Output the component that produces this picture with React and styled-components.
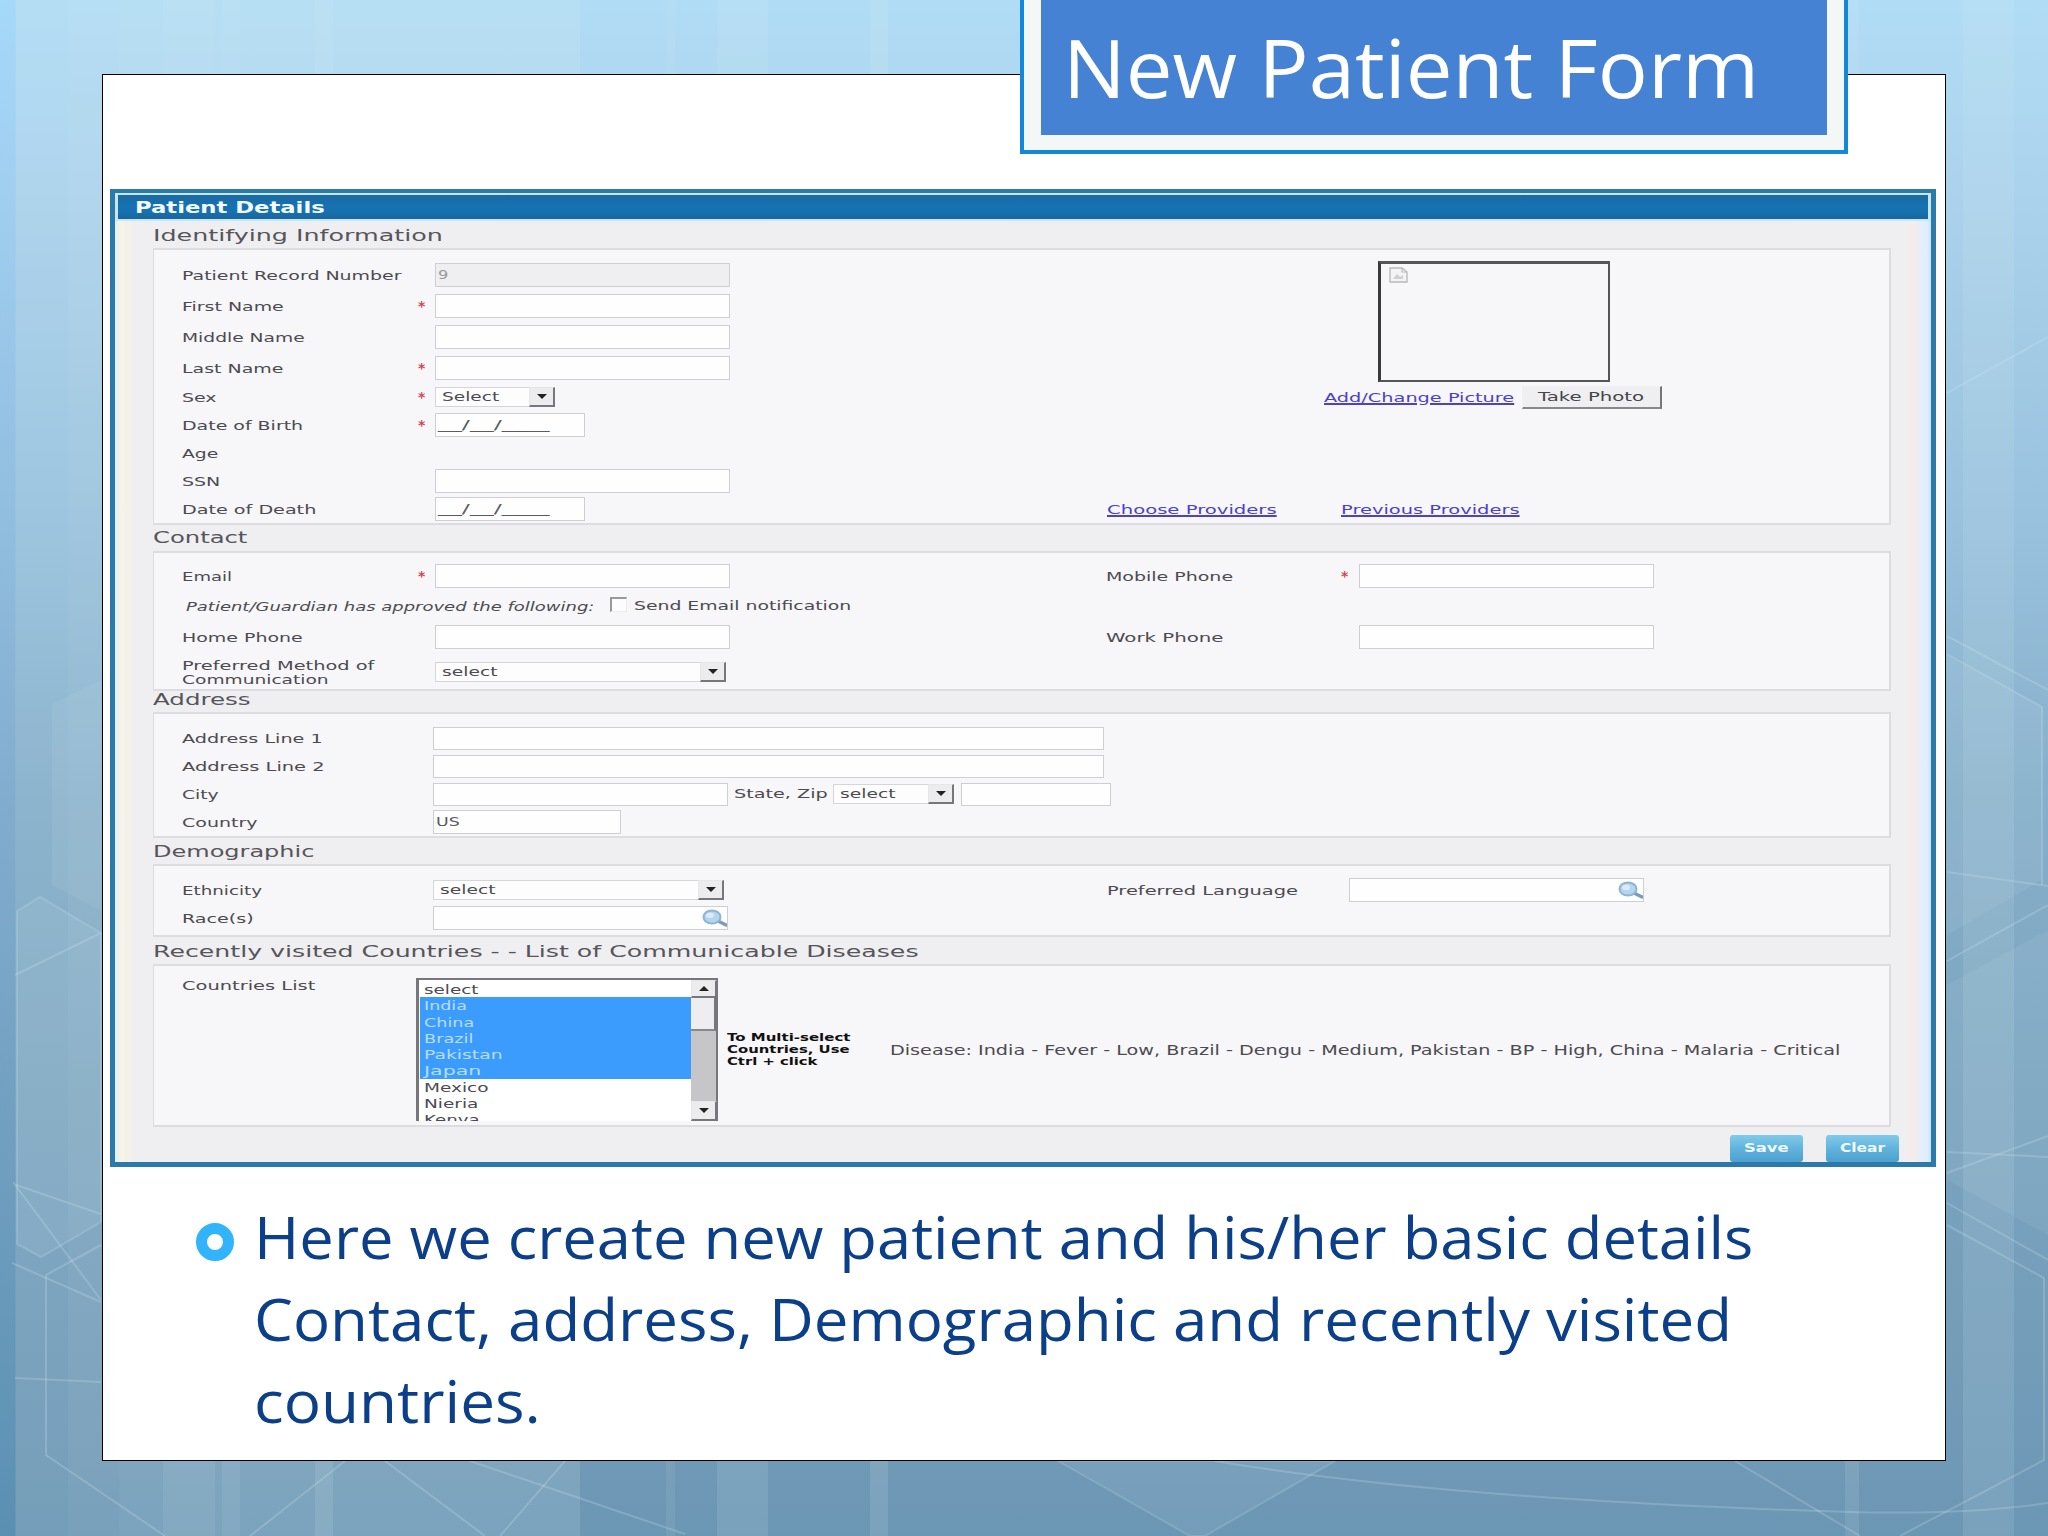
import React, { useLayoutEffect, useRef, useState } from 'react';
import styled, { createGlobalStyle, css } from 'styled-components';

const Global = createGlobalStyle`
  html, body { margin: 0; padding: 0; }
  body { width: 2048px; height: 1536px; overflow: hidden; }
  *, *::before, *::after { box-sizing: border-box; }
`;

const formFont = '"DejaVu Sans", Verdana, sans-serif';
const slideFont = '"Open Sans", Candara, sans-serif';

/* ---------- text that is stretched to a given width ---------- */

const FitBox = styled.span`
  display: inline-block;
  flex: none;
  width: ${(p) => p.$w}px;
  white-space: pre;
`;
const FitInner = styled.span`
  display: inline-block;
  transform-origin: 0 50%;
`;

function Fit({ w, children }) {
  const ref = useRef(null);
  const [scale, setScale] = useState(1);
  useLayoutEffect(() => {
    setScale(w / ref.current.offsetWidth);
  }, [w, children]);
  return (
    <FitBox $w={w}>
      <FitInner ref={ref} style={{ transform: `scaleX(${scale})` }}>{children}</FitInner>
    </FitBox>
  );
}

/* ---------- slide ---------- */

const Slide = styled.div`
  position: relative;
  width: 2048px;
  height: 1536px;
  padding: 74px 0 0 102px;
  overflow: hidden;
  background: linear-gradient(180deg, #b1dcf5 0, #abd2ec 200px, #9ac3df 500px, #87afca 800px, #7ba4bf 1100px, #7099b7 1461px, #6b96b4 1536px);
`;
const Backdrop = styled.svg`
  position: absolute;
  left: 0;
  top: 0;
`;
const Card = styled.main`
  position: relative;
  display: flex;
  flex-direction: column;
  width: 1844px;
  height: 1387px;
  padding: 114px 0 0 7px;
  border: 1.5px solid #000;
  background: #fff;
`;
const TitleFrame = styled.header`
  position: absolute;
  left: 1020px;
  top: 0;
  width: 828px;
  height: 154px;
  padding: 0 17px 15px;
  border: 4px solid #1188d9;
  border-top: 0;
  background: #f3f7f6;
`;
const Title = styled.h1`
  margin: 0;
  height: 135px;
  padding: 12px 0 0 22px;
  background: #4682d4;
  color: #fff;
  font: 400 81px/110px ${slideFont};
`;

/* ---------- panel ---------- */

const Panel = styled.section`
  display: flex;
  flex-direction: column;
  width: 1826px;
  height: 978px;
  padding: 2px 0 0;
  border: 5px solid #2b7aaa;
  border-top-width: 4px;
  background: linear-gradient(90deg, #dff1f8 0, #f7f3e6 6px, #efeef0 22px, #efeef0 1792px, #f9ebe5 1799px, #e4effa 1805px, #e0effb 1812px, #c5e4f4 1816px);
  font-family: ${formFont};
  color: #4c4b50;
`;
const PanelHead = styled.div`
  flex: none;
  height: 28px;
  margin: -2px 1px -1px 0;
  padding: 1px 0 0 17px;
  border: 2px solid #c5e8f7;
  border-left-width: 3px;
  background: linear-gradient(#1c69a2, #1671b1 45%, #1671b1 70%, #1a659b);
  color: #f3fbff;
  font: bold 16px/24px ${formFont};
`;
const Body = styled.div`
  display: flex;
  flex-direction: column;
  padding: 0 40px 0 38px;
`;
const Legend = styled.h2`
  display: flex;
  align-items: flex-end;
  margin: 0;
  height: ${(p) => p.$h}px;
  padding-bottom: ${(p) => p.$pb || 4}px;
  font: 400 16px/17px ${formFont};
  color: #56555a;
`;
const Box = styled.div`
  display: flex;
  height: ${(p) => p.$h}px;
  padding: ${(p) => p.$pt}px 0 0 28px;
  border: 2px solid #dddce0;
  border-left-width: 1px;
  background: #f7f6f9;
  font-size: 13px;
  line-height: 14px;
`;
const Column = styled.div`
  display: flex;
  flex-direction: column;
  flex: none;
  width: ${(p) => p.$w}px;
`;
const Row = styled.div`
  display: flex;
  align-items: center;
  flex: none;
  height: ${(p) => p.$h}px;
  padding-left: ${(p) => p.$pl || 0}px;
`;
const Label = styled.div`
  flex: none;
  display: flex;
  flex-direction: column;
  width: ${(p) => p.$w || 236}px;
  padding-top: 2px;
`;
const Star = styled.span`
  flex: none;
  width: ${(p) => p.$w || 17}px;
  height: 14px;
  color: #cf4a56;
  font: bold 14px/14px ${formFont};
`;
const Field = styled.div`
  flex: none;
  display: flex;
  align-items: center;
  width: ${(p) => p.$w || 295}px;
  height: ${(p) => p.$h || 24}px;
  margin-left: ${(p) => p.$ml || 0}px;
  padding-left: 2px;
  border: 1.5px solid #cfced2;
  background: ${(p) => (p.$off ? '#efeef0' : '#fefefe')};
  color: ${(p) => (p.$off ? '#9a999d' : '#5a595e')};
`;
const Drop = styled.div`
  flex: none;
  display: flex;
  justify-content: space-between;
  align-items: center;
  width: ${(p) => p.$w}px;
  height: 20px;
  margin-left: ${(p) => p.$ml || 0}px;
  padding-left: 6px;
  border: 1px solid #d6d5d9;
  border-right: 0;
  background: #fdfdfe;
`;
const arrow = css`
  &::after {
    content: '';
    border: 5px solid transparent;
    ${(p) => (p.$up ? 'border-bottom: 5px solid #222; border-top: 0;' : 'border-top: 5px solid #222; border-bottom: 0;')}
  }
`;
const ArrowButton = styled.span`
  display: flex;
  align-items: center;
  justify-content: center;
  flex: none;
  width: 26px;
  height: ${(p) => p.$h || 20}px;
  border: 1px solid #e6e6e8;
  border-right: 2px solid #77767a;
  border-bottom: 2px solid #77767a;
  background: #ececee;
  ${arrow}
`;
const Link = styled.a`
  flex: none;
  margin-right: ${(p) => p.$mr || 0}px;
  padding-top: 2px;
  color: #4b41cf;
  text-decoration: none;
  & > span > span { text-decoration: underline; text-decoration-thickness: 1.5px; text-underline-offset: 1px; }
`;
const Photo = styled.div`
  flex: none;
  width: 232px;
  height: 121px;
  margin-left: 271px;
  padding: 3px 8px;
  border: 2px solid #555458;
  border-top-width: 3px;
  border-left: 3px solid #3a393d;
`;
const PhotoButton = styled.button`
  width: 140px;
  height: 23px;
  padding: 1px 0 0 15px;
  border: 1px solid #f1f0f2;
  border-right: 2px solid #77767a;
  border-bottom: 2px solid #88878b;
  background: #efeef0;
  color: #45444a;
  text-align: left;
  font: 13px/18px ${formFont};
`;
const Italic = styled.span`
  padding-top: 2px;
  font-style: italic;
`;
const Check = styled.span`
  flex: none;
  width: 17px;
  height: 15px;
  margin: 0 7px 4px 16px;
  border: 1px solid #ecebee;
  border-top: 2px solid #99989c;
  border-left: 2px solid #99989c;
  background: #fcfbfd;
`;
const ListBox = styled.div`
  display: flex;
  flex: none;
  width: 302px;
  height: 143px;
  margin: 12px 9px 0 0;
  border: 2px solid #77767a;
  border-left-width: 3px;
  border-bottom: 0;
  background: #fff;
`;
const Options = styled.ul`
  flex: 1;
  height: 141px;
  margin: 0;
  padding: 1px 0 0 1px;
  overflow: hidden;
  list-style: none;
`;
const Option = styled.li`
  height: 16.3px;
  padding-left: 4px;
  line-height: 18px;
  background: ${(p) => (p.$on ? '#3c9cfd' : 'transparent')};
  color: ${(p) => (p.$on ? '#b8ddff' : '#4c4b50')};
`;
const ScrollTrack = styled.div`
  display: flex;
  flex-direction: column;
  width: 25px;
  background: #c6c6c9;
`;
const Thumb = styled.div`
  height: 33px;
  margin-bottom: auto;
  border-right: 2px solid #77767a;
  border-bottom: 2px solid #88878b;
  background: #eeeef0;
`;
const Hint = styled.div`
  display: flex;
  flex-direction: column;
  flex: none;
  width: 163px;
  margin-top: 66px;
  color: #111;
  font: bold 11px/12.2px ${formFont};
`;
const Disease = styled.div`
  margin-top: 75px;
  font-size: 14px;
  line-height: 18px;
`;
const Actions = styled.div`
  display: flex;
  justify-content: flex-end;
  gap: 23px;
  padding: 8px 32px 0 0;
`;
const Action = styled.button`
  width: 73px;
  height: 27px;
  padding: 0 0 0 14px;
  border: 0;
  border-radius: 3px;
  background: linear-gradient(#80cbea, #62b3dc 50%, #4da0d0);
  color: #eefaff;
  text-align: left;
  font: bold 12px/27px ${formFont};
`;

/* ---------- caption ---------- */

const Caption = styled.div`
  display: flex;
  padding: 28px 0 0 86px;
  color: #0b3f8a;
  font: 400 59px/82px ${slideFont};
`;
const Bullet = styled.span`
  flex: none;
  width: 38px;
  height: 38px;
  margin: 28px 20px 0 0;
  border: 11px solid #31b4fb;
  border-radius: 50%;
`;
const Lines = styled.div`
  display: flex;
  flex-direction: column;
`;

/* ---------- drawings ---------- */

const IconSlot = styled.span`
  display: flex;
  margin-left: auto;
`;

const SearchIcon = () => (
  <IconSlot>
    <svg width="26" height="20" viewBox="0 0 26 20">
      <path d="M17 13 L25 17" stroke="#7c9db8" strokeWidth="3.5" strokeLinecap="round" />
      <ellipse cx="11" cy="9" rx="8.5" ry="6.6" fill="#b5d5ee" stroke="#8fb3d0" strokeWidth="2" />
      <ellipse cx="9" cy="7.4" rx="4" ry="2.6" fill="#d9ebf8" />
    </svg>
  </IconSlot>
);

const BrokenImage = () => (
  <svg width="19" height="16" viewBox="0 0 19 16">
    <path d="M1 1 H13 L18 5 V15 H1 Z" fill="#f3f2f5" stroke="#bbbabf" strokeWidth="1.4" />
    <path d="M13 1 V5 H18" fill="none" stroke="#bbbabf" strokeWidth="1.2" />
    <path d="M4 12 L8 7 L11 10 L14 8 V12 Z" fill="#cfced3" />
  </svg>
);

const stripes = [
  [15, 53, 0.08], [68, 51, 0.12], [119, 461, 0.15], [163, 52, 0.08], [222, 18, 0.08], [315, 18, 0.12],
  [666, 9, 0.08], [717, 51, 0.13], [870, 18, 0.14], [1845, 14, 0.12], [1963, 51, 0.13],
];

const lines = [
  'M15 975 L101 933', 'M16 1185 L101 1214', 'M12 1263 L101 1302', 'M15 1378 L101 1382',
  'M101 1245 L46 1275 V1455 L165 1536', 'M13 1182 L101 1300',
  'M1947 393 L2048 337', 'M1947 636 L2048 690', 'M1947 654 L2042 707 V885', 'M1947 872 L2048 886',
  'M1947 961 L2048 905', 'M1947 1152 L2048 1157', 'M1947 1173 L2048 1136',
  'M1947 1203 L2048 1260', 'M1947 1225 L2044 1278 V1460 L1900 1536',
  'M345 1461 L250 1536', 'M385 1461 L485 1536', 'M470 1461 L685 1534', 'M565 1461 L500 1536',
  'M1735 1461 L1860 1536', 'M1215 1461 C1400 1492 1650 1506 1850 1512 C1930 1514 2000 1510 2048 1503',
];

const Background = () => (
  <Backdrop width="2048" height="1536" viewBox="0 0 2048 1536">
    <defs>
      <linearGradient id="edge" x1="0" y1="0" x2="0" y2="1">
        <stop offset="0" stopColor="#9fd6fd" stopOpacity="0.6" />
        <stop offset="0.5" stopColor="#80abd2" stopOpacity="0.5" />
        <stop offset="1" stopColor="#4f8bb0" stopOpacity="0.6" />
      </linearGradient>
    </defs>
    <rect x="0" y="0" width="16" height="1536" fill="url(#edge)" />
    {stripes.map(([x, w, o]) => (
      <rect key={x} x={x} y="0" width={w} height="1536" fill="#dcefef" opacity={o} />
    ))}
    <g fill="#d8ebf8" fillOpacity="0.09">
      <path d="M17 911 L40 897 L101 933 V1222 L41 1257 L17 1244 Z" stroke="#c8e6f2" strokeOpacity="0.22" strokeWidth="2" />
      <path d="M52 704 L101 680 V911 L52 885 Z" />
      <path d="M1058 1461 L1190 1536 H1205 L1335 1461 Z" stroke="#c8e6f2" strokeOpacity="0.2" strokeWidth="2" />
      <path d="M1947 655 L2042 707 V880 L1947 935 Z" />
      <path d="M1947 985 L2048 930 V1235 L1947 1180 Z" />
    </g>
    <g fill="none" stroke="#d5edf5" strokeOpacity="0.22" strokeWidth="2">
      {lines.map((d) => <path key={d} d={d} />)}
    </g>
  </Backdrop>
);

/* ---------- form ---------- */

const identity = [
  { t: 'Patient Record Number', w: 220, h: 31, off: true, v: '9', vw: 10 },
  { t: 'First Name', w: 102, h: 32, star: true },
  { t: 'Middle Name', w: 122, h: 30 },
  { t: 'Last Name', w: 102, h: 31, star: true },
  { t: 'Sex', w: 35, h: 28, star: true, drop: true },
  { t: 'Date of Birth', w: 121, h: 27, star: true, fw: 150, v: '__/__/____', vw: 112 },
  { t: 'Age', w: 36, h: 29, none: true },
  { t: 'SSN', w: 38, h: 28 },
  { t: 'Date of Death', w: 134, h: 27, fw: 150, v: '__/__/____', vw: 112 },
];

const countries = [
  ['select', 55], ['India', 43, true], ['China', 50, true], ['Brazil', 49, true], ['Pakistan', 78, true],
  ['Japan', 57, true], ['Mexico', 64], ['Nieria', 54], ['Kenya', 56],
];

const IdentityRow = ({ r }) => (
  <Row $h={r.h}>
    <Label><Fit w={r.w}>{r.t}</Fit></Label>
    <Star>{r.star ? '*' : ''}</Star>
    {r.drop && <Drop $w={120}><Fit w={57}>Select</Fit><ArrowButton /></Drop>}
    {!r.drop && !r.none && (
      <Field $w={r.fw} $off={r.off}>{r.v && <Fit w={r.vw}>{r.v}</Fit>}</Field>
    )}
  </Row>
);

export default function App() {
  return (
    <>
      <Global />
      <Slide>
        <Background />
        <Card>
          <Panel>
            <PanelHead><Fit w={190}>Patient Details</Fit></PanelHead>
            <Body>
              <Legend $h={28}><Fit w={290}>Identifying Information</Fit></Legend>
              <Box $h={277} $pt={9}>
                <Column $w={925}>
                  {identity.map((r) => <IdentityRow key={r.t} r={r} />)}
                </Column>
                <Column $w={600}>
                  <Row $h={124}><Photo><BrokenImage /></Photo></Row>
                  <Row $h={28} $pl={217}>
                    <Link $mr={8}><Fit w={190}>Add/Change Picture</Fit></Link>
                    <PhotoButton><Fit w={106}>Take Photo</Fit></PhotoButton>
                  </Row>
                  <Row $h={84} />
                  <Row $h={27}>
                    <Link $mr={65}><Fit w={169}>Choose Providers</Fit></Link>
                    <Link><Fit w={178}>Previous Providers</Fit></Link>
                  </Row>
                </Column>
              </Box>

              <Legend $h={26} $pb={5}><Fit w={94}>Contact</Fit></Legend>
              <Box $h={140} $pt={7}>
                <Column $w={924}>
                  <Row $h={31}>
                    <Label><Fit w={50}>Email</Fit></Label><Star>*</Star><Field />
                  </Row>
                  <Row $h={30} $pl={4}>
                    <Italic><Fit w={408}>Patient/Guardian has approved the following:</Fit></Italic>
                    <Check />
                    <Row $h={16}><Fit w={217}>Send Email notification</Fit></Row>
                  </Row>
                  <Row $h={32}>
                    <Label><Fit w={121}>Home Phone</Fit></Label><Star /><Field />
                  </Row>
                  <Row $h={37}>
                    <Label>
                      <Fit w={192}>Preferred Method of</Fit>
                      <Fit w={146}>Communication</Fit>
                    </Label>
                    <Star />
                    <Drop $w={291}><Fit w={56}>select</Fit><ArrowButton /></Drop>
                  </Row>
                </Column>
                <Column $w={600}>
                  <Row $h={31}>
                    <Label $w={235}><Fit w={127}>Mobile Phone</Fit></Label><Star $w={18}>*</Star><Field />
                  </Row>
                  <Row $h={30} />
                  <Row $h={32}>
                    <Label $w={253}><Fit w={117}>Work Phone</Fit></Label><Field />
                  </Row>
                </Column>
              </Box>

              <Legend $h={21}><Fit w={98}>Address</Fit></Legend>
              <Box $h={126} $pt={10}>
                <Column $w={1500}>
                  <Row $h={28}>
                    <Label $w={251}><Fit w={140}>Address Line 1</Fit></Label><Field $w={671} $h={23} />
                  </Row>
                  <Row $h={28}>
                    <Label $w={251}><Fit w={142}>Address Line 2</Fit></Label><Field $w={671} $h={23} />
                  </Row>
                  <Row $h={28}>
                    <Label $w={251}><Fit w={36}>City</Fit></Label>
                    <Field $h={23} />
                    <Row $h={23} $pl={6}><Fit w={93}>State, Zip</Fit></Row>
                    <Drop $w={121} $ml={6}><Fit w={56}>select</Fit><ArrowButton /></Drop>
                    <Field $w={150} $h={23} $ml={7} />
                  </Row>
                  <Row $h={28}>
                    <Label $w={251}><Fit w={76}>Country</Fit></Label>
                    <Field $w={188}><Fit w={24}>US</Fit></Field>
                  </Row>
                </Column>
              </Box>

              <Legend $h={26}><Fit w={162}>Demographic</Fit></Legend>
              <Box $h={73} $pt={10}>
                <Column $w={925}>
                  <Row $h={28}>
                    <Label $w={251}><Fit w={80}>Ethnicity</Fit></Label>
                    <Drop $w={291}><Fit w={56}>select</Fit><ArrowButton /></Drop>
                  </Row>
                  <Row $h={27}>
                    <Label $w={251}><Fit w={72}>Race(s)</Fit></Label>
                    <Field><SearchIcon /></Field>
                  </Row>
                </Column>
                <Column $w={600}>
                  <Row $h={27}>
                    <Label $w={242}><Fit w={191}>Preferred Language</Fit></Label>
                    <Field><SearchIcon /></Field>
                  </Row>
                </Column>
              </Box>

              <Legend $h={27}>
                <Fit w={766}>Recently visited Countries - - List of Communicable Diseases</Fit>
              </Legend>
              <Box $h={163} $pt={0}>
                <Column $w={234}>
                  <Row $h={38}><Label><Fit w={133}>Countries List</Fit></Label></Row>
                </Column>
                <ListBox>
                  <Options>
                    {countries.map(([name, w, on]) => (
                      <Option key={name} $on={on}><Fit w={w}>{name}</Fit></Option>
                    ))}
                  </Options>
                  <ScrollTrack>
                    <ArrowButton $up $h={18} />
                    <Thumb />
                    <ArrowButton $h={20} />
                  </ScrollTrack>
                </ListBox>
                <Hint>
                  <Fit w={124}>To Multi-select</Fit>
                  <Fit w={123}>Countries, Use</Fit>
                  <Fit w={90}>Ctrl + click</Fit>
                </Hint>
                <Disease>
                  <Fit w={950}>Disease: India - Fever - Low, Brazil - Dengu - Medium, Pakistan - BP - High, China - Malaria - Critical</Fit>
                </Disease>
              </Box>
            </Body>
            <Actions>
              <Action><Fit w={45}>Save</Fit></Action>
              <Action><Fit w={45}>Clear</Fit></Action>
            </Actions>
          </Panel>

          <Caption>
            <Bullet />
            <Lines>
              <Fit w={1499}>Here we create new patient and his/her basic details</Fit>
              <Fit w={1478}>Contact, address, Demographic and recently visited</Fit>
              <Fit w={287}>countries.</Fit>
            </Lines>
          </Caption>
        </Card>
        <TitleFrame>
          <Title><Fit w={696}>New Patient Form</Fit></Title>
        </TitleFrame>
      </Slide>
    </>
  );
}
